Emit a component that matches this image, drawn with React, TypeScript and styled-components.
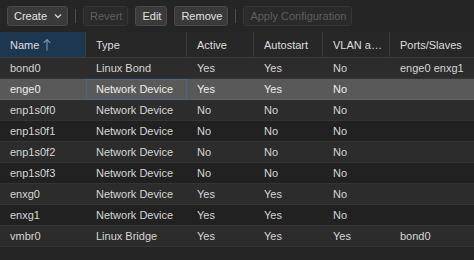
import React from 'react';
import styled, { createGlobalStyle } from 'styled-components';

const Global = createGlobalStyle`
  html, body {
    margin: 0;
    padding: 0;
    background: #252525;
  }
  body {
    font-family: "Liberation Sans", Arial, sans-serif;
    font-size: 11px;
    color: #dcdcdc;
  }
`;

const Page = styled.div`
  width: 474px;
  height: 260px;
  overflow: hidden;
  background: #252525;
`;

const Toolbar = styled.div`
  display: flex;
  align-items: center;
  height: 32px;
  padding: 0 7px;
  gap: 7px;
  box-sizing: border-box;
`;

const Button = styled.button<{ disabled?: boolean }>`
  display: flex;
  align-items: center;
  gap: 7px;
  height: 20px;
  padding: 0 5px 0 6px;
  font: inherit;
  font-size: 11px;
  border-radius: 3px;
  border: 1px solid ${({ disabled }) => (disabled ? '#363636' : '#4a4a4a')};
  background: ${({ disabled }) => (disabled ? '#2a2a2a' : '#3a3a3a')};
  color: ${({ disabled }) => (disabled ? '#5e5e5e' : '#e2e2e2')};
`;

const Sep = styled.div`
  width: 1px;
  height: 14px;
  background: #4a4a4a;
`;

const Table = styled.div`
  display: grid;
  grid-template-columns: 86px 101px 67px 69px 67px 84px;
`;

const HeadCell = styled.div<{ sorted?: boolean; last?: boolean }>`
  height: 26px;
  display: flex;
  align-items: center;
  padding-left: 10px;
  gap: 4px;
  background: ${({ sorted }) => (sorted ? '#1e3750' : '#272727')};
  border-right: ${({ last }) => (last ? 'none' : '1px solid #3a3a3a')};
  border-bottom: 1px solid #3c3c3c;
  color: #dedede;
  white-space: nowrap;
  box-sizing: border-box;
`;

const Cell = styled.div<{ tone: 'light' | 'dark' | 'sel'; focus?: boolean }>`
  height: 21px;
  display: flex;
  align-items: center;
  padding-left: 10px;
  box-sizing: border-box;
  white-space: nowrap;
  background: ${({ tone }) => (tone === 'sel' ? '#595959' : tone === 'light' ? '#2c2c2c' : '#212121')};
  border-bottom: 1px solid ${({ tone }) => (tone === 'sel' ? '#626262' : '#343434')};
  color: ${({ tone }) => (tone === 'sel' ? '#eeeeee' : '#d6d6d6')};
  outline: ${({ focus }) => (focus ? '1px solid #4b6785' : 'none')};
  outline-offset: -1px;
`;

const Chevron = () => (
  <svg width="8" height="6" viewBox="0 0 8 6">
    <path d="M1 1.5 L4 4.5 L7 1.5" stroke="#cfcfcf" strokeWidth="1.4" fill="none" />
  </svg>
);

const SortUp = () => (
  <svg width="8" height="13" viewBox="0 0 8 13">
    <path d="M4 1.5 V12.5 M0.8 4.8 L4 1.5 L7.2 4.8" stroke="#7d93ab" strokeWidth="1.1" fill="none" />
  </svg>
);

const columns = ['Name', 'Type', 'Active', 'Autostart', 'VLAN a…', 'Ports/Slaves'];

const rows = [
  ['bond0', 'Linux Bond', 'Yes', 'Yes', 'No', 'enge0 enxg1'],
  ['enge0', 'Network Device', 'Yes', 'Yes', 'No', ''],
  ['enp1s0f0', 'Network Device', 'No', 'No', 'No', ''],
  ['enp1s0f1', 'Network Device', 'No', 'No', 'No', ''],
  ['enp1s0f2', 'Network Device', 'No', 'No', 'No', ''],
  ['enp1s0f3', 'Network Device', 'No', 'No', 'No', ''],
  ['enxg0', 'Network Device', 'Yes', 'Yes', 'No', ''],
  ['enxg1', 'Network Device', 'Yes', 'Yes', 'No', ''],
  ['vmbr0', 'Linux Bridge', 'Yes', 'Yes', 'Yes', 'bond0'],
];

export default function App() {
  return (
    <Page>
      <Global />
      <Toolbar>
        <Button>
          Create <Chevron />
        </Button>
        <Sep />
        <Button disabled>Revert</Button>
        <Button>Edit</Button>
        <Button>Remove</Button>
        <Sep />
        <Button disabled>Apply Configuration</Button>
      </Toolbar>
      <Table>
        {columns.map((c, i) => (
          <HeadCell key={c} sorted={i === 0} last={i === columns.length - 1}>
            {c}
            {i === 0 && <SortUp />}
          </HeadCell>
        ))}
        {rows.map((r, ri) =>
          r.map((v, ci) => (
            <Cell
              key={`${ri}-${ci}`}
              tone={ri === 1 ? 'sel' : ri % 2 === 0 ? 'light' : 'dark'}
              focus={ri === 1 && ci === 1}
            >
              {v}
            </Cell>
          ))
        )}
      </Table>
    </Page>
  );
}
